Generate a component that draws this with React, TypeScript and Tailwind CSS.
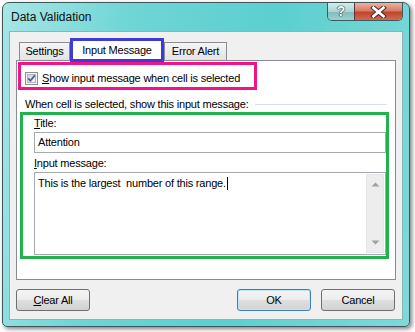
import React from 'react';

const btn =
  "h-[22px] w-[74px] rounded-[3px] border bg-[linear-gradient(#f4f4f4_0%,#ececec_48%,#dedede_52%,#d2d2d2_100%)] flex items-center justify-center";

const Checkbox = () => (
  <svg width="13" height="13" viewBox="0 0 13 13" className="shrink-0">
    <defs>
      <linearGradient id="cbg" x1="0" y1="0" x2="1" y2="1">
        <stop offset="0" stopColor="#cbcfd5" />
        <stop offset="1" stopColor="#f6f6f6" />
      </linearGradient>
    </defs>
    <rect x="0.5" y="0.5" width="12" height="12" fill="#f4f4f4" stroke="#8e8f8f" />
    <rect x="2.5" y="2.5" width="8" height="8" fill="url(#cbg)" stroke="#b3b7bd" />
    <path d="M3.2 6.4 L5.4 8.8 L9.8 3.4" fill="none" stroke="#4a5f97" strokeWidth="1.7" />
  </svg>
);

const TabButton = ({ label, w }: { label: string; w: string }) => (
  <div
    className={`${w} h-[18px] border border-b-0 border-[#898c95] bg-[linear-gradient(#f5f5f5,#e3e3e3)] flex items-center justify-center`}
  >
    {label}
  </div>
);

export default function App() {
  return (
    <div className="w-[415px] h-[332px] bg-white pl-[2px] pt-[2px] font-['Liberation_Sans',Arial,sans-serif] text-[11px] tracking-[-0.2px] text-black overflow-hidden">
      <div className="w-[408px] h-[325px] rounded-t-[7px] rounded-b-[5px] border border-[#41585a] bg-[linear-gradient(100deg,#a6e6e6_0%,#6fd5d5_28%,#5ccfcf_60%,#7fd9d9_100%)] shadow-[2px_2px_4px_rgba(0,0,0,0.5)] flex flex-col px-[6px] pb-[6px]">
        {/* title bar */}
        <div className="h-[28px] flex justify-between items-start shrink-0">
          <div className="pl-[2px] pt-[5px] text-[12px] tracking-normal text-[#101010]">Data Validation</div>
          <div className="flex h-[18px] rounded-b-[5px] border border-t-0 border-[#3d5b5e] overflow-hidden">
            <div className="w-[26px] h-full bg-[linear-gradient(#d2eded_0%,#a8d6d6_50%,#7fbcbc_52%,#9fd0d0_100%)] flex items-center justify-center text-[14px] font-bold text-white [text-shadow:0_0_1px_#1f2f30,0_0_1px_#1f2f30,0_0_1px_#1f2f30]">
              ?
            </div>
            <div className="w-[48px] h-full border-l border-[#5a3a36] bg-[linear-gradient(#e9b3a4_0%,#d77c66_45%,#c2432c_55%,#d26a55_100%)] flex items-center justify-center">
              <svg width="17" height="12" viewBox="0 0 17 12">
                <path d="M3.5 1.8 L13.5 10.2 M13.5 1.8 L3.5 10.2" stroke="#3a2020" strokeWidth="4.6" strokeLinecap="square" />
                <path d="M3.5 1.8 L13.5 10.2 M13.5 1.8 L3.5 10.2" stroke="#ffffff" strokeWidth="2.8" strokeLinecap="square" />
              </svg>
            </div>
          </div>
        </div>

        {/* client area */}
        <div className="flex-1 border border-[#86b6b8] bg-[#f0f0f0] flex flex-col px-[6px]">
          {/* tabs */}
          <div className="mt-[6px] h-[22px] flex items-end pl-[3px]">
            <TabButton label="Settings" w="w-[51px]" />
            <div className="relative z-10 -mb-[2px] w-[94px] h-[24px] border-[3px] border-[#3d3dd6] bg-white flex items-center justify-center">
              Input Message
            </div>
            <TabButton label="Error Alert" w="w-[63px]" />
          </div>

          {/* panel */}
          <div className="h-[220px] border border-[#898c95] bg-white flex flex-col">
            <div className="ml-[1px] mt-[1px] w-[239px] h-[28px] border-[3px] border-[#f2128a] flex items-start pt-[7px] pl-[4px] gap-[4px]">
              <Checkbox />
              <span className="leading-[13px]">
                <span className="underline">S</span>how input message when cell is selected
              </span>
            </div>

            <div className="mt-[7px] h-[14px] flex items-center pl-[8px] pr-[8px]">
              <span className="whitespace-nowrap">When cell is selected, show this input message:</span>
              <div className="flex-1 h-px bg-[#d5dfe5] ml-[6px]" />
            </div>

            <div className="mt-[1px] ml-[3px] w-[369px] h-[147px] border-[3px] border-[#22b14c] pl-[11px] pt-[1px]">
              <div className="h-[14px] leading-[14px]">
                <span className="underline">T</span>itle:
              </div>
              <div className="mt-[2px] h-[21px] border border-[#a5a9b0] bg-white flex items-center pl-[3px]">
                Attention
              </div>
              <div className="mt-[3px] h-[14px] leading-[14px]">
                <span className="underline">I</span>nput message:
              </div>
              <div className="mt-[2px] h-[83px] border border-[#a5a9b0] bg-white flex">
                <div className="flex-1 pl-[3px] pt-[3px] leading-[14px] whitespace-pre flex items-start">
                  <span>This is the largest  number of this range.</span>
                  <span className="ml-[1px] mt-[1px] w-px h-[13px] bg-black" />
                </div>
                <div className="w-[18px] my-[1px] mr-[1px] border border-[#e6e6e6] bg-[#ededed] flex flex-col items-center justify-between py-[7px]">
                  <svg width="9" height="5" viewBox="0 0 9 5">
                    <path d="M0.5 4.5 L4.5 0.5 L8.5 4.5 Z" fill="#a0a0a0" />
                  </svg>
                  <svg width="9" height="5" viewBox="0 0 9 5">
                    <path d="M0.5 0.5 L4.5 4.5 L8.5 0.5 Z" fill="#a0a0a0" />
                  </svg>
                </div>
              </div>
            </div>
          </div>

          {/* buttons */}
          <div className="mt-[9px] flex justify-between pr-[1px]">
            <div className={`${btn} border-[#707070]`}>
              <span>
                <span className="underline">C</span>lear All
              </span>
            </div>
            <div className="flex gap-[10px]">
              <div className={`${btn} border-[#3c7fb1] shadow-[inset_0_0_0_1px_#bfe6f5]`}>OK</div>
              <div className={`${btn} border-[#707070]`}>Cancel</div>
            </div>
          </div>
        </div>
      </div>
    </div>
  );
}
